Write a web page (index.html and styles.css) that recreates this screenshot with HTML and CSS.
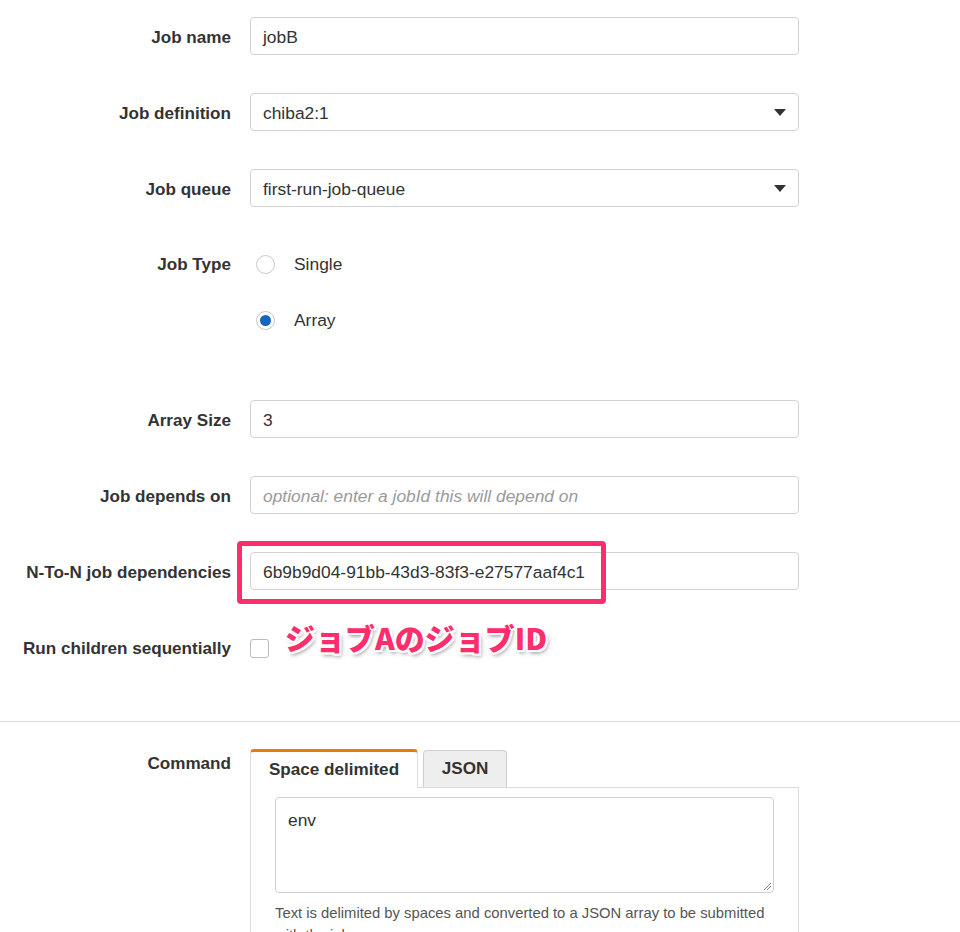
FILE: index.html
```html
<!DOCTYPE html>
<html lang="ja">
<head>
<meta charset="utf-8">
<title>Submit job</title>
<link rel="stylesheet" href="styles.css">
</head>
<body>
<main class="form">
  <div class="row">
    <div class="lbl">Job name</div>
    <div class="field">jobB</div>
  </div>
  <div class="row">
    <div class="lbl">Job definition</div>
    <div class="field select">chiba2:1<svg class="caret" width="12" height="7" viewBox="0 0 12 7"><path d="M0 0H12L6 7Z" fill="#333"/></svg></div>
  </div>
  <div class="row">
    <div class="lbl">Job queue</div>
    <div class="field select">first-run-job-queue<svg class="caret" width="12" height="7" viewBox="0 0 12 7"><path d="M0 0H12L6 7Z" fill="#333"/></svg></div>
  </div>
  <div class="row row-top radios-row">
    <div class="lbl lbl-radio">Job Type</div>
    <div class="radios">
      <div class="radio-opt"><span class="radio"></span><span class="opt-text">Single</span></div>
      <div class="radio-opt"><span class="radio checked"></span><span class="opt-text">Array</span></div>
    </div>
  </div>
  <div class="row">
    <div class="lbl">Array Size</div>
    <div class="field">3</div>
  </div>
  <div class="row">
    <div class="lbl">Job depends on</div>
    <div class="field placeholder">optional: enter a jobId this will depend on</div>
  </div>
  <div class="row">
    <div class="lbl">N-To-N job dependencies</div>
    <div class="field highlight-host">6b9b9d04-91bb-43d3-83f3-e27577aaf4c1<span class="highlight"></span></div>
  </div>
  <div class="row last-row">
    <div class="lbl">Run children sequentially</div>
    <div class="check-wrap"><span class="checkbox"></span><span class="note">ジョブAのジョブID</span></div>
  </div>
</main>
<hr class="divider">
<section class="form cmd">
  <div class="row row-top">
    <div class="lbl lbl-cmd">Command</div>
    <div class="tabs-wrap">
      <div class="tabs">
        <div class="tab active">Space delimited</div>
        <div class="tab">JSON</div>
      </div>
      <div class="panel">
        <div class="textarea">env<svg class="grip" width="10" height="10" viewBox="0 0 10 10"><path d="M9 2L2 9M9 5L5 9" stroke="#888" stroke-width="1"/></svg></div>
        <p class="help">Text is delimited by spaces and converted to a JSON array to be submitted with the job.</p>
      </div>
    </div>
  </div>
</section>
</body>
</html>
```
FILE: styles.css
```css
html, body {
  margin: 0;
  padding: 0;
  background: #fff;
  overflow: hidden;
}
body {
  font-family: "Liberation Sans", Arial, "Noto Sans CJK JP", sans-serif;
  color: #333;
  font-size: 17px;
}
.form {
  padding-top: 17px;
}
.row {
  display: grid;
  grid-template-columns: 231px 549px;
  column-gap: 19px;
  align-items: center;
  margin-bottom: 38px;
}
.row-top {
  align-items: start;
}
.lbl {
  text-align: right;
  font-weight: bold;
  font-size: 17.1px;
  color: #333;
  white-space: nowrap;
  padding-top: 4px;
}
.field {
  position: relative;
  box-sizing: border-box;
  height: 38px;
  border: 1px solid #d2d2d2;
  border-radius: 4px;
  padding: 3px 12px 0;
  display: flex;
  align-items: center;
  font-size: 17.4px;
  color: #333;
  white-space: nowrap;
}
.select {
  justify-content: space-between;
}
.caret {
  display: block;
  margin-top: -3px;
}
.placeholder {
  color: #9a9a9a;
  font-style: italic;
}
.radios-row {
  margin-bottom: 61px;
}
.lbl-radio {
  line-height: 38px;
  padding-top: 1px;
}
.radios {
  display: flex;
  flex-direction: column;
  gap: 18px;
}
.radio-opt {
  height: 38px;
  display: flex;
  align-items: center;
  gap: 19px;
  padding-left: 6px;
  font-size: 17.4px;
}
.opt-text {
  padding-top: 0;
}
.radio {
  box-sizing: border-box;
  width: 19px;
  height: 19px;
  border-radius: 50%;
  border: 1px solid #c8c8c8;
  background: #fff;
  display: flex;
  align-items: center;
  justify-content: center;
}
.radio.checked::after {
  content: "";
  width: 11px;
  height: 11px;
  border-radius: 50%;
  background: #1565c0;
}
.highlight {
  position: absolute;
  left: -14px;
  top: -12px;
  width: 369px;
  height: 63px;
  box-sizing: border-box;
  border: 5px solid #fe2e6c;
  border-radius: 4px;
  pointer-events: none;
}
.last-row {
  margin-bottom: 55px;
}
.check-wrap {
  position: relative;
  height: 38px;
  display: flex;
  align-items: center;
}
.checkbox {
  box-sizing: border-box;
  width: 19px;
  height: 19px;
  border: 1px solid #bcbcbc;
  border-radius: 3px;
  background: #fff;
  margin-top: 2px;
}
.note {
  position: absolute;
  left: 35px;
  top: -13px;
  font-family: "Noto Sans CJK JP", sans-serif;
  font-weight: 900;
  font-size: 30px;
  color: #fe2e6c;
  white-space: nowrap;
  text-shadow:
    2px 0 0 #fff, -2px 0 0 #fff, 0 2px 0 #fff, 0 -2px 0 #fff,
    2px 2px 0 #fff, -2px -2px 0 #fff, 2px -2px 0 #fff, -2px 2px 0 #fff,
    2px 3px 4px rgba(0, 0, 0, 0.45);
}
.divider {
  margin: 0;
  border: 0;
  border-top: 1px solid #dcdcdc;
}
.cmd {
  padding-top: 27px;
}
.lbl-cmd {
  line-height: 28px;
  padding-top: 1px;
}
.tabs-wrap {
  display: flex;
  flex-direction: column;
}
.tabs {
  display: flex;
  align-items: flex-end;
  gap: 5px;
}
.tab {
  box-sizing: border-box;
  height: 37px;
  width: 84px;
  border: 1px solid #cfcfcf;
  border-bottom: 0;
  border-radius: 4px 4px 0 0;
  background: #eeeeee;
  font-weight: bold;
  font-size: 17.1px;
  display: flex;
  align-items: center;
  justify-content: center;
  color: #333;
}
.tab.active {
  position: relative;
  z-index: 1;
  width: 168px;
  height: 39px;
  margin-bottom: -1px;
  background: #fff;
  border: 1px solid #dcdcdc;
  border-top: 3px solid #e8790c;
  border-bottom: 0;
}
.panel {
  border: 1px solid #dcdcdc;
  padding: 9px 24px 0 24px;
  height: 200px;
}
.textarea {
  position: relative;
  box-sizing: border-box;
  width: 499px;
  height: 96px;
  border: 1px solid #d0d0d0;
  border-radius: 4px;
  padding: 12px 12px;
  font-size: 17.4px;
  color: #333;
}
.grip {
  position: absolute;
  right: 1px;
  bottom: 1px;
}
.help {
  margin: 9px 0 0;
  font-size: 14.8px;
  line-height: 22px;
  color: #555;
  width: 499px;
}
```
